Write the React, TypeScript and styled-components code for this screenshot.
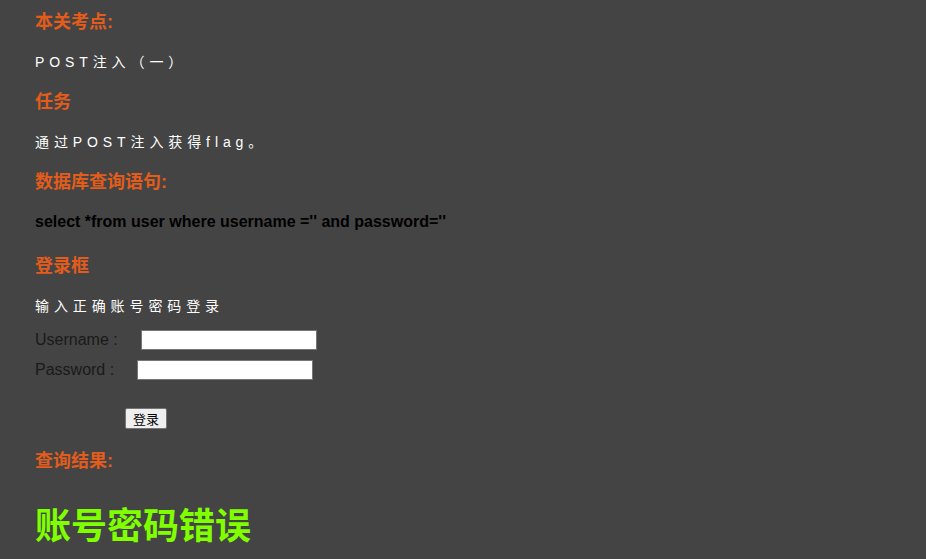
import React from "react"
import styled, { createGlobalStyle } from "styled-components"

const GlobalStyle = createGlobalStyle`
  html, body {
    margin: 0;
    padding: 0;
    background: #444444;
  }
  body {
    font-family: "Liberation Sans", "Noto Sans CJK SC", sans-serif;
  }
`

const Page = styled.div`
  min-height: 559px;
  padding: 10px 35px 0;
  box-sizing: border-box;
  background: #444444;
`

interface GapProps {
  readonly gap?: number
}

const Heading = styled.h3<GapProps>`
  margin: ${p => p.gap ?? 18}px 0 0;
  font-family: "Liberation Sans", "Noto Sans CJK SC", sans-serif;
  font-size: 18px;
  line-height: 24px;
  font-weight: bold;
  color: #e25c1c;
`

const Note = styled.p<GapProps>`
  margin: ${p => p.gap ?? 18}px 0 0;
  font-size: 14px;
  line-height: 20px;
  letter-spacing: 4.9px;
  color: #ffffff;
`

const Query = styled.p<GapProps>`
  margin: ${p => p.gap ?? 18}px 0 0;
  font-size: 16px;
  line-height: 20px;
  font-weight: bold;
  color: #000000;
`

const Form = styled.form`
  margin: 14px 0 0;
  display: flex;
  flex-direction: column;
  align-items: flex-start;
`

const Row = styled.label<GapProps>`
  margin-top: ${p => p.gap ?? 0}px;
  display: flex;
  align-items: center;
  height: 20px;
  font-size: 16px;
  color: #1a1a1a;
`

const Label = styled.span<{ readonly width: number }>`
  width: ${p => p.width}px;
`

const Field = styled.input`
  box-sizing: border-box;
  width: 176px;
  height: 20px;
  margin: 0;
  padding: 1px 2px;
  border: 1px solid #767676;
  background: #ffffff;
  outline: none;
`

const Submit = styled.button`
  margin: 28px 0 0 90px;
  box-sizing: border-box;
  width: 42px;
  height: 21px;
  padding: 0;
  border: 1px solid #767676;
  border-radius: 2px;
  background: #efefef;
  font-family: "Noto Sans CJK SC", sans-serif;
  font-size: 13px;
  line-height: 19px;
  color: #000000;
`

const Result = styled.h1`
  margin: 28px 0 0;
  font-family: "Noto Sans CJK SC", sans-serif;
  font-size: 36px;
  line-height: 44px;
  font-weight: bold;
  color: #7fff00;
`

const App: React.FC = () => {
  return (
    <>
      <GlobalStyle />
      <Page>
        <Heading gap={0}>本关考点:</Heading>
        <Note>POST注入（一）</Note>
        <Heading>任务</Heading>
        <Note>通过POST注入获得flag。</Note>
        <Heading>数据库查询语句:</Heading>
        <Query>select *from user where username ='' and password=''</Query>
        <Heading gap={22}>登录框</Heading>
        <Note>输入正确账号密码登录</Note>
        <Form onSubmit={e => e.preventDefault()}>
          <Row>
            <Label width={106}>Username :</Label>
            <Field type="text" name="username" />
          </Row>
          <Row gap={10}>
            <Label width={102}>Password :</Label>
            <Field type="password" name="password" />
          </Row>
          <Submit type="submit">登录</Submit>
        </Form>
        <Heading gap={20}>查询结果:</Heading>
        <Result>账号密码错误</Result>
      </Page>
    </>
  )
}

export default App
